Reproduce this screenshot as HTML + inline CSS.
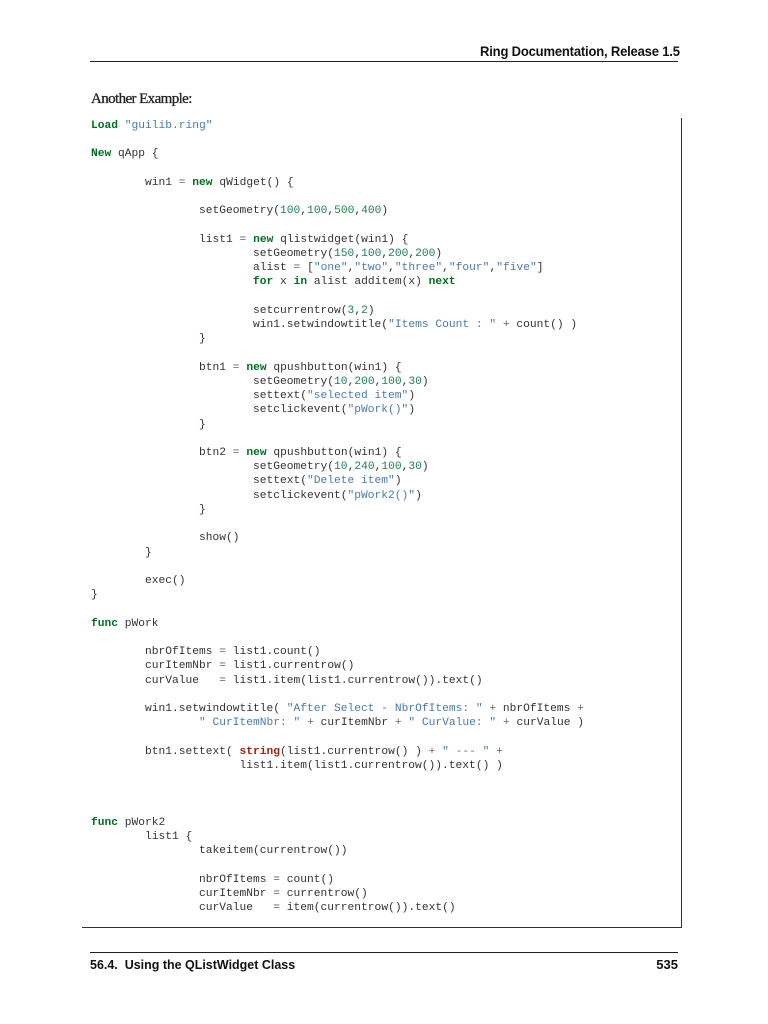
<!DOCTYPE html>
<html><head><meta charset="utf-8"><style>
body{margin:0;width:768px;height:1024px;background:#fff;position:relative;overflow:hidden}
.hdr{position:absolute;right:88px;top:43px;font:bold 14px "Liberation Sans",sans-serif;color:#111;letter-spacing:-0.2px;transform:scaleX(0.93);transform-origin:right}
.rule{position:absolute;left:90px;width:588px;height:1px;background:#222}
.title{position:absolute;left:91px;top:91px;font:normal 15px "Liberation Serif",serif;color:#222;letter-spacing:-0.6px;-webkit-text-stroke:0.3px #222}
.box{position:absolute;left:82px;top:118px;width:599px;height:809px;border-right:1.5px solid #333;border-bottom:1.5px solid #333}
pre{position:absolute;left:91px;top:119px;margin:0;font:11.25px/14.22px "Liberation Mono",monospace;color:#333}
.k{color:#007020;font-weight:bold}.s{color:#4a7aa8}.n{color:#208050}.o{color:#666}.b{color:#a02010;font-weight:bold}
.ftl{position:absolute;left:90px;top:957px;font:bold 13px "Liberation Sans",sans-serif;color:#111;transform:scaleX(0.96);transform-origin:left}
.ftr{position:absolute;right:90px;top:957px;font:bold 13px "Liberation Sans",sans-serif;color:#111}
</style></head><body>
<div class="hdr">Ring Documentation, Release 1.5</div>
<div class="rule" style="top:61px"></div>
<div class="title">Another Example:</div>
<div class="box"></div>
<pre><span class="k">Load</span> <span class="s">"guilib.ring"</span>

<span class="k">New</span> qApp {

        win1 <span class="o">=</span> <span class="k">new</span> qWidget() {

                setGeometry(<span class="n">100</span>,<span class="n">100</span>,<span class="n">500</span>,<span class="n">400</span>)

                list1 <span class="o">=</span> <span class="k">new</span> qlistwidget(win1) {
                        setGeometry(<span class="n">150</span>,<span class="n">100</span>,<span class="n">200</span>,<span class="n">200</span>)
                        alist <span class="o">=</span> [<span class="s">"one"</span>,<span class="s">"two"</span>,<span class="s">"three"</span>,<span class="s">"four"</span>,<span class="s">"five"</span>]
                        <span class="k">for</span> x <span class="k">in</span> alist additem(x) <span class="k">next</span>

                        setcurrentrow(<span class="n">3</span>,<span class="n">2</span>)
                        win1.setwindowtitle(<span class="s">"Items Count : "</span> <span class="o">+</span> count() )
                }

                btn1 <span class="o">=</span> <span class="k">new</span> qpushbutton(win1) {
                        setGeometry(<span class="n">10</span>,<span class="n">200</span>,<span class="n">100</span>,<span class="n">30</span>)
                        settext(<span class="s">"selected item"</span>)
                        setclickevent(<span class="s">"pWork()"</span>)
                }

                btn2 <span class="o">=</span> <span class="k">new</span> qpushbutton(win1) {
                        setGeometry(<span class="n">10</span>,<span class="n">240</span>,<span class="n">100</span>,<span class="n">30</span>)
                        settext(<span class="s">"Delete item"</span>)
                        setclickevent(<span class="s">"pWork2()"</span>)
                }

                show()
        }

        exec()
}

<span class="k">func</span> pWork

        nbrOfItems <span class="o">=</span> list1.count()
        curItemNbr <span class="o">=</span> list1.currentrow()
        curValue   <span class="o">=</span> list1.item(list1.currentrow()).text()

        win1.setwindowtitle( <span class="s">"After Select - NbrOfItems: "</span> <span class="o">+</span> nbrOfItems <span class="o">+</span>
                <span class="s">" CurItemNbr: "</span> <span class="o">+</span> curItemNbr <span class="o">+</span> <span class="s">" CurValue: "</span> <span class="o">+</span> curValue )

        btn1.settext( <span class="b">string</span>(list1.currentrow() ) <span class="o">+</span> <span class="s">" --- "</span> <span class="o">+</span>
                      list1.item(list1.currentrow()).text() )



<span class="k">func</span> pWork2
        list1 {
                takeitem(currentrow())

                nbrOfItems <span class="o">=</span> count()
                curItemNbr <span class="o">=</span> currentrow()
                curValue   <span class="o">=</span> item(currentrow()).text()</pre>
<div class="rule" style="top:952px"></div>
<div class="ftl">56.4.&nbsp; Using the QListWidget Class</div>
<div class="ftr">535</div>
</body></html>
